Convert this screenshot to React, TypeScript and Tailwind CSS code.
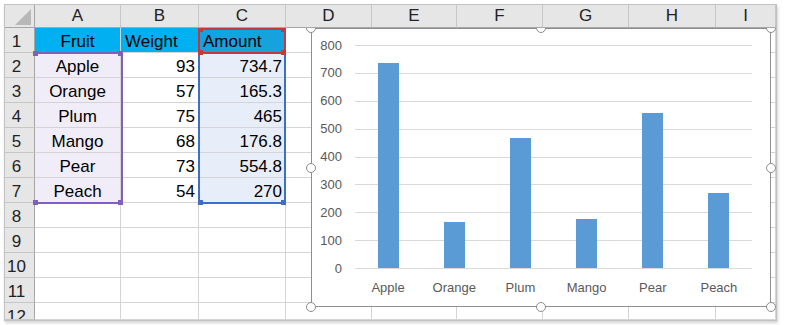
import React from "react";

const letters = ["A", "B", "C", "D", "E", "F", "G", "H", "I"];

const data = [
  ["Fruit", "Weight", "Amount"],
  ["Apple", "93", "734.7"],
  ["Orange", "57", "165.3"],
  ["Plum", "75", "465"],
  ["Mango", "68", "176.8"],
  ["Pear", "73", "554.8"],
  ["Peach", "54", "270"],
];

const chartData = [
  { name: "Apple", value: 734.7 },
  { name: "Orange", value: 165.3 },
  { name: "Plum", value: 465 },
  { name: "Mango", value: 176.8 },
  { name: "Pear", value: 554.8 },
  { name: "Peach", value: 270 },
];

const ticks = [800, 700, 600, 500, 400, 300, 200, 100, 0];

const Handle = ({ className }: { className: string }) => (
  <div
    className={`absolute h-[10px] w-[10px] rounded-full border-[1.5px] border-[#8c8c8c] bg-white ${className}`}
  />
);

// range highlight box with its little corner squares
const Range = ({
  className,
  color,
  corners,
}: {
  className: string;
  color: string;
  corners: ("tl" | "tr" | "bl" | "br")[];
}) => (
  <div className={`absolute z-10 ${className}`}>
    {corners.includes("tl") && <div className={`absolute -left-[2px] -top-[3px] h-[5px] w-[5px] ${color}`} />}
    {corners.includes("tr") && <div className={`absolute -right-[2px] -top-[3px] h-[5px] w-[5px] ${color}`} />}
    {corners.includes("bl") && <div className={`absolute -bottom-[3px] -left-[2px] h-[5px] w-[5px] ${color}`} />}
    {corners.includes("br") && <div className={`absolute -bottom-[3px] -right-[2px] h-[5px] w-[5px] ${color}`} />}
  </div>
);

const Cell = ({ row, col }: { row: number; col: number }) => {
  // row 0 = column header, col 0 = row header
  if (row === 0 && col === 0) {
    return (
      <div className="relative z-20 flex items-start justify-end border-b border-r border-b-[#a6a6a6] border-r-[#a6a6a6] bg-[#e6e6e6] pr-[2px] pt-[3px]">
        <svg width="18" height="18" viewBox="0 0 18 18">
          <polygon points="1,17 17,17 17,1" fill="#b8b8b8" />
        </svg>
      </div>
    );
  }
  if (row === 0) {
    return (
      <div className="relative z-20 flex items-center justify-center border-b border-r border-b-[#a6a6a6] border-r-[#c6c6c6] bg-[#e6e6e6] text-[17px] leading-[20px] text-[#222]">
        {letters[col - 1]}
      </div>
    );
  }
  if (col === 0) {
    return (
      <div className="flex items-start justify-center overflow-hidden border-b border-r border-b-[#c6c6c6] border-r-[#a6a6a6] bg-[#e6e6e6] pr-[6px] pt-[4px] text-[17px] leading-[20px] text-[#222]">
        {row}
      </div>
    );
  }

  const value = data[row - 1]?.[col - 1];
  let bg = "bg-white";
  if (row === 1 && col <= 2) bg = "bg-[#00b0f0]";
  if (row === 1 && col === 3) bg = "bg-[#15a2dd]";
  if (row >= 2 && row <= 7 && col === 1) bg = "bg-[#f0edf8]";
  if (row >= 2 && row <= 7 && col === 3) bg = "bg-[#e8eef9]";

  let align = "justify-center";
  if (row === 1 && col > 1) align = "justify-start pl-[4px]";
  if (row > 1 && col > 1) align = "justify-end pr-[3px]";

  return (
    <div
      className={`flex items-start whitespace-nowrap border-b border-r border-[#d4d4d4] pt-[4px] text-[17px] leading-[20px] text-black ${bg} ${align}`}
    >
      {value}
    </div>
  );
};

const Chart = () => (
  <div className="absolute left-[306px] top-[23px] z-10 h-[279px] w-[460px] border border-[#8f8f8f] bg-white text-[13px] text-[#595959]">
    <div className="flex pt-[16px]">
      <div className="flex h-[224px] w-[30px] flex-col items-end justify-between">
        {ticks.map((t) => (
          <div key={t} className="flex h-px items-center leading-[16px]">
            {t}
          </div>
        ))}
      </div>
      <div className="ml-[13px] w-[397px]">
        <div className="grid h-[224px]">
          <div className="col-start-1 row-start-1 flex flex-col justify-between">
            {ticks.map((t) => (
              <div key={t} className="h-px bg-[#d9d9d9]" />
            ))}
          </div>
          <div className="col-start-1 row-start-1 flex items-end pb-px">
            {chartData.map((d) => (
              <div key={d.name} className="flex flex-1 justify-center">
                <div
                  className="w-[21px] bg-[#5b9bd5]"
                  style={{ height: `${(d.value / 800) * 223}px` }}
                />
              </div>
            ))}
          </div>
        </div>
        <div className="mt-[10px] grid grid-cols-6 text-center leading-[18px]">
          {chartData.map((d) => (
            <div key={d.name}>{d.name}</div>
          ))}
        </div>
      </div>
    </div>
    <Handle className="left-[-6px] top-[-6px]" />
    <Handle className="left-1/2 top-[-6px] -translate-x-1/2" />
    <Handle className="right-[-6px] top-[-6px]" />
    <Handle className="left-[-6px] top-1/2 -translate-y-1/2" />
    <Handle className="right-[-6px] top-1/2 -translate-y-1/2" />
    <Handle className="bottom-[-6px] left-[-6px]" />
    <Handle className="bottom-[-6px] left-1/2 -translate-x-1/2" />
    <Handle className="bottom-[-6px] right-[-6px]" />
  </div>
);

export default function App() {
  const rowIdx = Array.from({ length: 13 }, (_, i) => i);
  const colIdx = Array.from({ length: 10 }, (_, i) => i);

  return (
    <div className="h-[325px] w-[785px] bg-white pl-[4px] pt-[4px] font-['Liberation_Sans',Arial,sans-serif]">
      <div className="relative h-[317px] w-[773px] overflow-hidden border border-[#c2c2c2] shadow-[1px_2px_3px_rgba(0,0,0,0.18)]">
        <div className="grid grid-cols-[30px_86px_78px_87px_86px_85px_86px_86px_87px_60px] grid-rows-[23px_repeat(11,25px)_17px]">
          {rowIdx.map((r) => colIdx.map((c) => <Cell key={`${r}-${c}`} row={r} col={c} />))}
        </div>

        {/* categories */}
        <Range
          className="left-[30px] top-[47px] h-[152px] w-[88px] border-b-2 border-r-2 border-t-2 border-[#7f5fbf]"
          color="bg-[#7f5fbf]"
          corners={["tl", "tr", "bl", "br"]}
        />
        {/* values */}
        <Range
          className="left-[193px] top-[47px] h-[152px] w-[88px] border-2 border-[#3d6fc6]"
          color="bg-[#3d6fc6]"
          corners={["bl", "br"]}
        />
        {/* series name */}
        <Range
          className="left-[193px] top-[23px] h-[26px] w-[88px] border-2 border-[#c4393f]"
          color="bg-[#c4393f]"
          corners={["tl", "tr", "bl", "br"]}
        />

        <Chart />
      </div>
    </div>
  );
}
